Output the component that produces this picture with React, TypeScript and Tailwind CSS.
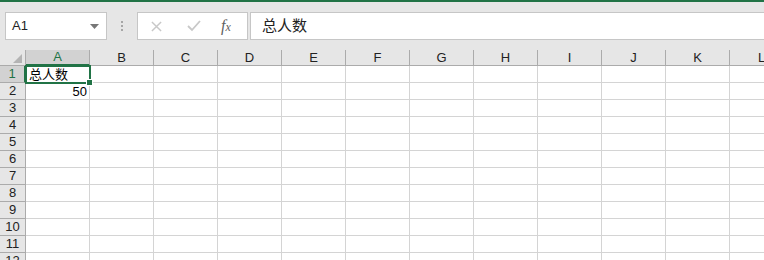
import React from "react"

const COLS = ["A", "B", "C", "D", "E", "F", "G", "H", "I", "J", "K", "L"]
const ROWS = [1, 2, 3, 4, 5, 6, 7, 8, 9, 10, 11, 12]

const FONT = { fontFamily: '"Liberation Sans", Arial, "Noto Sans CJK SC", sans-serif' }

function Cell({ row, col }: { row: number; col: string }) {
  let content: React.ReactNode = null
  if (row === 2 && col === "A") content = <span className="ml-auto pr-[2px]">50</span>
  return (
    <div className="flex h-[17px] items-center border-b border-r border-[#d4d4d4] bg-white text-[13px] leading-none text-black">
      {content}
    </div>
  )
}

export default function App() {
  return (
    <div className="h-[260px] w-[764px] overflow-hidden bg-[#e6e6e6]" style={FONT}>
      <div className="h-[2px] bg-[#217346]" />
      {/* formula bar */}
      <div className="flex h-[48px] items-start pt-[10px]">
        <div className="ml-[5px] flex h-[28px] w-[102px] items-center border border-[#c6c6c6] bg-white pl-[6px] text-[13px] text-[#222]">
          <span>A1</span>
          <svg className="ml-auto mr-[7px]" width="9" height="5" viewBox="0 0 9 5">
            <path d="M0 0h9L4.5 5z" fill="#777" />
          </svg>
        </div>
        <div className="flex h-[28px] w-[30px] flex-col items-center justify-center gap-[2px]">
          <span className="block h-[2px] w-[2px] bg-[#a6a6a6]" />
          <span className="block h-[2px] w-[2px] bg-[#a6a6a6]" />
          <span className="block h-[2px] w-[2px] bg-[#a6a6a6]" />
        </div>
        <div className="flex h-[28px] w-[111px] items-center border border-[#c6c6c6] bg-white">
          <svg className="ml-[13px]" width="11" height="11" viewBox="0 0 12 12">
            <path d="M1 1l10 10M11 1L1 11" stroke="#c8c8c8" strokeWidth="1.6" />
          </svg>
          <svg className="ml-[25px]" width="14" height="12" viewBox="0 0 14 12">
            <path d="M1 6l4 4 8-9" stroke="#c8c8c8" strokeWidth="1.8" fill="none" />
          </svg>
          <span
            className="ml-[20px] text-[16px] italic text-[#5f5f5f]"
            style={{ fontFamily: '"Liberation Serif", "Times New Roman", serif' }}
          >
            f<span className="text-[12px]">x</span>
          </span>
        </div>
        <div className="ml-[2px] flex h-[28px] flex-1 items-center border-y border-l border-[#c6c6c6] bg-white pl-[11px] text-[15px] text-[#222]">
          总人数
        </div>
      </div>
      {/* sheet */}
      <div className="grid grid-cols-[26px_repeat(12,64px)] bg-white">
        <div className="relative h-[16px] border-b border-r border-[#ababab] bg-[#e6e6e6]">
          <svg className="absolute right-[3px] bottom-[2px]" width="9" height="9" viewBox="0 0 9 9">
            <path d="M9 0v9H0z" fill="#b4b4b4" />
          </svg>
        </div>
        {COLS.map((c) => (
          <div
            key={c}
            className={
              c === "A"
                ? "flex h-[16px] items-center justify-center border-b-2 border-r border-b-[#217346] border-r-[#ababab] bg-[#d2d2d2] text-[13px] text-[#217346]"
                : "flex h-[16px] items-center justify-center border-b border-r border-[#ababab] bg-[#e6e6e6] text-[13px] text-[#222]"
            }
          >
            {c}
          </div>
        ))}
        {ROWS.map((r) => (
          <React.Fragment key={r}>
            <div
              className={
                r === 1
                  ? "flex h-[17px] items-center justify-center border-b border-r-2 border-b-[#ababab] border-r-[#217346] bg-[#d2d2d2] text-[13px] text-[#217346]"
                  : "flex h-[17px] items-center justify-center border-b border-r border-[#ababab] bg-[#e6e6e6] text-[13px] text-[#222]"
              }
            >
              {r}
            </div>
            {COLS.map((c) =>
              r === 1 && c === "A" ? (
                <div key={c} className="relative flex h-[17px] items-center border-b border-r border-[#d4d4d4] bg-white text-[13px] leading-none text-black">
                  <span className="pl-[3px]">总人数</span>
                  <div className="absolute left-[-1px] top-[-1px] h-[19px] w-[66px] border-2 border-[#217346]" />
                  <div className="absolute right-[-4px] bottom-[-4px] h-[7px] w-[7px] border border-white bg-[#217346]" />
                </div>
              ) : (
                <Cell key={c} row={r} col={c} />
              )
            )}
          </React.Fragment>
        ))}
      </div>
    </div>
  )
}
